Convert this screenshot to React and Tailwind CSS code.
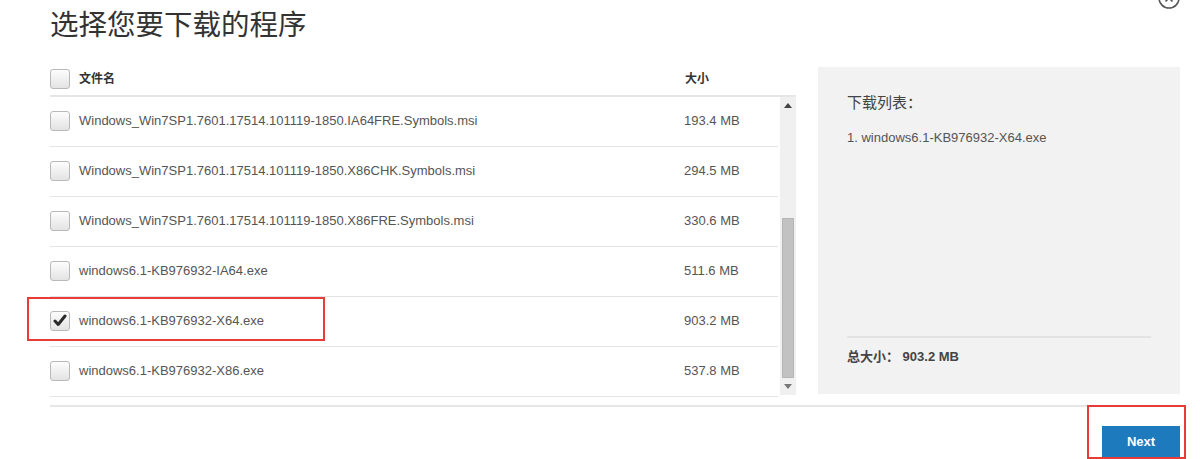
import React from 'react';

const files = [
  { name: 'Windows_Win7SP1.7601.17514.101119-1850.IA64FRE.Symbols.msi', size: '193.4 MB' },
  { name: 'Windows_Win7SP1.7601.17514.101119-1850.X86CHK.Symbols.msi', size: '294.5 MB' },
  { name: 'Windows_Win7SP1.7601.17514.101119-1850.X86FRE.Symbols.msi', size: '330.6 MB' },
  { name: 'windows6.1-KB976932-IA64.exe', size: '511.6 MB' },
  { name: 'windows6.1-KB976932-X64.exe', size: '903.2 MB', checked: true },
  { name: 'windows6.1-KB976932-X86.exe', size: '537.8 MB' },
];

const Checkbox = ({ checked }) => (
  <span className="flex h-[20px] w-[20px] flex-none items-center justify-center rounded-[3px] border border-[#b9b9b9] bg-gradient-to-b from-[#fdfdfd] to-[#e3e3e3]">
    {checked && (
      <svg width="14" height="13" viewBox="0 0 14 13">
        <path d="M2 7 L5.2 10.5 L12 2" fill="none" stroke="#2a2a2a" strokeWidth="3" strokeLinecap="round" strokeLinejoin="round" />
      </svg>
    )}
  </span>
);

export default function App() {
  return (
    <div className="relative h-[459px] w-[1200px] overflow-hidden bg-white font-['Liberation_Sans','Noto_Sans_CJK_SC',sans-serif] text-[#555]">
      {/* close icon, cut off at the top */}
      <svg className="absolute left-[1157px] top-[-14px]" width="24" height="24" viewBox="0 0 24 24">
        <circle cx="12" cy="12" r="10" fill="none" stroke="#555" strokeWidth="1.6" />
        <path d="M8.5 8.5 L15.5 15.5 M15.5 8.5 L8.5 15.5" stroke="#555" strokeWidth="1.6" />
      </svg>

      <h1 className="ml-[50px] mt-[7px] text-[28.5px] leading-[36px] font-normal text-[#333]">选择您要下载的程序</h1>

      <div className="ml-[50px] mt-[24px] flex w-[1130px] gap-[22px]">
        {/* file table */}
        <div className="flex w-[746px] flex-col">
          <div className="flex h-[30px] items-start border-b-2 border-[#e6e6e6] pt-[2px] text-[12px] font-bold text-[#333]">
            <Checkbox />
            <span className="ml-[9px] mt-[2px] leading-[16px]">文件名</span>
            <span className="ml-auto mr-[87px] mt-[2px] leading-[16px]">大小</span>
          </div>
          <div className="flex h-[298px]">
            <div className="flex w-[728px] flex-col">
              {files.map((f) => (
                <div key={f.name} className="flex h-[50px] flex-none items-center border-b border-[#e3e3e3] pb-[2px] text-[13px] text-[#555]">
                  <Checkbox checked={f.checked} />
                  <span className="ml-[9px] flex-1 whitespace-nowrap">{f.name}</span>
                  <span className="w-[94px] flex-none whitespace-nowrap">{f.size}</span>
                </div>
              ))}
            </div>
            {/* scrollbar */}
            <div className="ml-[2px] flex w-[16px] flex-col items-center bg-[#f0f0f0]">
              <svg className="mt-[6px]" width="8" height="5" viewBox="0 0 8 5">
                <path d="M0 5 L4 0 L8 5 Z" fill="#444" />
              </svg>
              <div className="mt-[110px] h-[160px] w-[12px] border border-[#b5b5b5] bg-[#c2c2c2]" />
              <svg className="mt-[6px]" width="8" height="5" viewBox="0 0 8 5">
                <path d="M0 0 L8 0 L4 5 Z" fill="#777" />
              </svg>
            </div>
          </div>
        </div>

        {/* download list */}
        <div className="flex h-[327px] w-[362px] flex-col bg-[#f2f2f2] px-[29px] pt-[26px]">
          <div className="text-[15px] leading-[20px] text-[#444]">下载列表：</div>
          <div className="mt-[17px] text-[13px] leading-[16px] text-[#555]">1. windows6.1-KB976932-X64.exe</div>
          <div className="mt-auto mb-[29px] border-t-2 border-[#e3e3e3] pt-[11px] text-[13px] font-bold leading-[16px] text-[#444]">
            总大小：&nbsp;903.2 MB
          </div>
        </div>
      </div>

      <div className="ml-[50px] mt-[10px] h-[2px] w-[1130px] bg-[#e6e6e6]" />

      <div className="mr-[20px] mt-[19px] flex justify-end">
        <button className="h-[36px] w-[78px] bg-[#1d7abd] pb-[4px] text-[13px] font-bold text-white">Next</button>
      </div>

      {/* red highlight boxes */}
      <div className="absolute left-[27px] top-[297px] h-[44px] w-[298px] border-2 border-[#ea3b3b]" />
      <div className="absolute left-[1087px] top-[405px] h-[54px] w-[99px] border-2 border-[#ea3b3b]" />
    </div>
  );
}
